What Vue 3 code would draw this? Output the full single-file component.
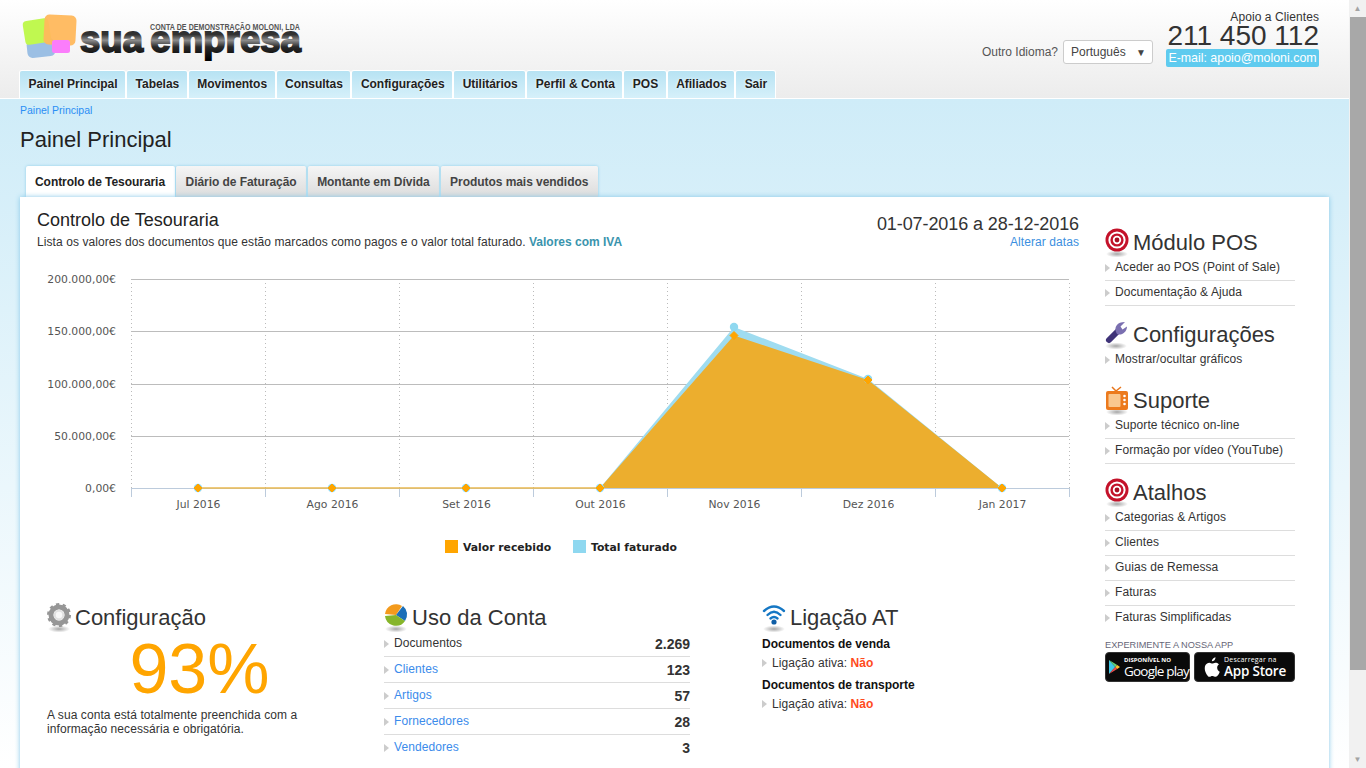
<script setup>
const navItems = ['Painel Principal', 'Tabelas', 'Movimentos', 'Consultas', 'Configurações', 'Utilitários', 'Perfil & Conta', 'POS', 'Afiliados', 'Sair']
const tabs = ['Controlo de Tesouraria', 'Diário de Faturação', 'Montante em Dívida', 'Produtos mais vendidos']

const BASE_Y = 223

const yLabels = [
  { label: '200.000,00€', y: 14 },
  { label: '150.000,00€', y: 66 },
  { label: '100.000,00€', y: 119 },
  { label: '50.000,00€', y: 171 },
]
const months = ['Jul 2016', 'Ago 2016', 'Set 2016', 'Out 2016', 'Nov 2016', 'Dez 2016', 'Jan 2017']
const ticks = [94, 228, 362, 496, 630, 764, 898, 1032]
const blueY = [BASE_Y, BASE_Y, BASE_Y, BASE_Y, 62, 114, BASE_Y]
const orangeY = [BASE_Y, BASE_Y, BASE_Y, BASE_Y, 70.5, 115, BASE_Y]

function pointX(i) {
  return 161 + i * 134
}
function areaPoints(values) {
  const line = values.map((y, i) => `${pointX(i)},${y}`).join(' ')
  return `${pointX(0)},${BASE_Y} ${line} ${pointX(6)},${BASE_Y}`
}
function diamond(i, y) {
  const x = pointX(i)
  return `${x},${y - 4} ${x + 4},${y} ${x},${y + 4} ${x - 4},${y}`
}

const sections = [
  { title: 'Módulo POS', icon: 'target', items: ['Aceder ao POS (Point of Sale)', 'Documentação & Ajuda'], lines: true },
  { title: 'Configurações', icon: 'wrench', items: ['Mostrar/ocultar gráficos'], lines: false },
  { title: 'Suporte', icon: 'tv', items: ['Suporte técnico on-line', 'Formação por vídeo (YouTube)'], lines: true },
  { title: 'Atalhos', icon: 'target', items: ['Categorias & Artigos', 'Clientes', 'Guias de Remessa', 'Faturas', 'Faturas Simplificadas'], lines: 'inner' },
]

const usage = [
  { label: 'Documentos', value: '2.269', link: false },
  { label: 'Clientes', value: '123', link: true },
  { label: 'Artigos', value: '57', link: true },
  { label: 'Fornecedores', value: '28', link: true },
  { label: 'Vendedores', value: '3', link: true },
]
</script>

<template>
  <div class="page">
    <div class="content">
      <header class="top">
        <div class="top-row">
          <svg class="logo" width="340" height="56" viewBox="0 0 340 56">
            <defs>
              <linearGradient id="logoText" x1="0" y1="0" x2="0" y2="1">
                <stop offset="0" stop-color="#1c1c1c" />
                <stop offset="0.38" stop-color="#333" />
                <stop offset="0.52" stop-color="#8c8c8c" />
                <stop offset="0.68" stop-color="#2a2a2a" />
                <stop offset="1" stop-color="#000" />
              </linearGradient>
              <radialGradient id="iconShade">
                <stop offset="0" stop-color="#000" stop-opacity="0.35" />
                <stop offset="1" stop-color="#000" stop-opacity="0" />
              </radialGradient>
            </defs>
            <rect x="7" y="29" width="28" height="18" rx="5" fill="#9bbfe4" transform="rotate(-6 21 38)" />
            <rect x="4" y="9.5" width="26" height="24" rx="4" fill="#c0f850" transform="rotate(-9 17 22)" />
            <rect x="24" y="5" width="32" height="30" rx="5" fill="#ffb85c" fill-opacity="0.95" transform="rotate(3 40 20)" />
            <rect x="32" y="30" width="18" height="13" rx="2.5" fill="#fb7dfb" />
            <text class="logo-sub" x="130" y="19.5" textLength="150" lengthAdjust="spacingAndGlyphs">CONTA DE DEMONSTRAÇÃO MOLONI, LDA</text>
            <text class="logo-name" x="60" y="42" textLength="221" lengthAdjust="spacingAndGlyphs" fill="url(#logoText)" stroke="url(#logoText)" stroke-width="1.8">sua empresa</text>
          </svg>
          <div class="lang">
            <span>Outro Idioma?</span>
            <div class="lang-select">Português<i>▼</i></div>
          </div>
          <div class="support">
            <div>Apoio a Clientes</div>
            <div class="support-phone">211 450 112</div>
            <div class="support-mail">E-mail: apoio@moloni.com</div>
          </div>
        </div>
        <nav class="nav">
          <a v-for="item in navItems" :key="item" class="nav-item">{{ item }}</a>
        </nav>
      </header>

      <div class="crumb">Painel Principal</div>
      <h1 class="page-title">Painel Principal</h1>

      <div class="tabs">
        <a v-for="(tab, i) in tabs" :key="tab" class="tab" :class="{ 'tab--active': i === 0 }">{{ tab }}</a>
      </div>

      <section class="card">
        <div class="main">
          <div class="main-head">
            <div>
              <h2>Controlo de Tesouraria</h2>
              <p>Lista os valores dos documentos que estão marcados como pagos e o valor total faturado. <b>Valores com IVA</b></p>
            </div>
            <div class="dates">
              <div class="dates-range">01-07-2016 a 28-12-2016</div>
              <a>Alterar datas</a>
            </div>
          </div>

          <svg class="chart" width="1042" height="300" viewBox="0 0 1042 300">
            <line v-for="row in yLabels" :key="row.label" x1="94" x2="1032" :y1="row.y" :y2="row.y" class="grid" />
            <line v-for="x in ticks" :key="'v' + x" :x1="x" :x2="x" y1="18" :y2="BASE_Y" class="dots" />
            <line v-for="x in ticks" :key="'t' + x" :x1="x" :x2="x" :y1="BASE_Y" :y2="BASE_Y + 9" class="tick" />
            <line x1="94" x2="1032" :y1="BASE_Y" :y2="BASE_Y" class="tick" />
            <text v-for="row in yLabels" :key="'l' + row.label" x="79" :y="row.y + 4" text-anchor="end" class="axis">{{ row.label }}</text>
            <text x="79" :y="BASE_Y + 4" text-anchor="end" class="axis">0,00€</text>
            <text v-for="(m, i) in months" :key="m" :x="pointX(i) + 0.5" y="243" text-anchor="middle" class="axis">{{ m }}</text>

            <polygon :points="areaPoints(blueY)" fill="#9fdcf0" />
            <polygon :points="areaPoints(orangeY)" fill="#ecae2e" />
            <line x1="161" x2="563" :y1="BASE_Y" :y2="BASE_Y" stroke="#eab84f" stroke-width="1.5" />
            <circle v-for="(y, i) in blueY" :key="'b' + i" :cx="pointX(i)" :cy="y" r="4.2" fill="#8fd8f0" />
            <polygon v-for="(y, i) in orangeY" :key="'o' + i" :points="diamond(i, y)" fill="#ffa500" stroke="#ffa500" stroke-width="1" stroke-linejoin="round" />

            <rect x="408" y="275" width="13" height="13" fill="#ffa500" />
            <text x="426" y="286" class="legend">Valor recebido</text>
            <rect x="536" y="275" width="13" height="13" fill="#8fd8f0" />
            <text x="554" y="286" class="legend">Total faturado</text>
          </svg>

          <div class="bottom">
            <div class="config">
              <h3 class="heading">
                <svg class="icon" width="24" height="30" viewBox="0 0 24 30">
                  <ellipse cx="12" cy="26" rx="11" ry="3.5" fill="url(#iconShade)" />
                  <circle cx="12" cy="12" r="8" fill="none" stroke="#969696" stroke-width="5" />
                  <circle cx="12" cy="12" r="10.5" fill="none" stroke="#969696" stroke-width="3" stroke-dasharray="3.2 3.4" />
                  <circle cx="12" cy="12" r="5.4" fill="#e2e2e2" />
                  <circle cx="12" cy="12" r="3.2" fill="#f8f8f8" />
                </svg>
                Configuração
              </h3>
              <div class="percent">93%</div>
              <p>A sua conta está totalmente preenchida com a informação necessária e obrigatória.</p>
            </div>

            <div class="usage">
              <h3 class="heading">
                <svg class="icon" width="24" height="30" viewBox="0 0 24 30">
                  <ellipse cx="12" cy="26" rx="11" ry="3.5" fill="url(#iconShade)" />
                  <path d="M12 12 L1 11 A11 11 0 0 1 18 3 Z" fill="#f39a1c" />
                  <path d="M12 12 L19 3 A11 11 0 0 1 21 18 Z" fill="#1b6fb8" />
                  <path d="M12 12 L21 18 A11 11 0 0 1 1 13 Z" fill="#86b52a" />
                </svg>
                Uso da Conta
              </h3>
              <ul class="usage-list">
                <li v-for="row in usage" :key="row.label" class="bullet">
                  <span :class="{ link: row.link }">{{ row.label }}</span>
                  <b>{{ row.value }}</b>
                </li>
              </ul>
            </div>

            <div class="at">
              <h3 class="heading">
                <svg class="icon" width="24" height="30" viewBox="0 0 24 30">
                  <ellipse cx="12" cy="26" rx="11" ry="3.5" fill="url(#iconShade)" />
                  <g fill="none" stroke="#1577c4" stroke-width="2.4" stroke-linecap="round">
                    <path d="M2 8 Q12 -1 22 8" />
                    <path d="M5.5 12 Q12 5.5 18.5 12" />
                    <path d="M8.5 15.5 Q12 12.5 15.5 15.5" />
                  </g>
                  <circle cx="12" cy="19" r="2.6" fill="#0f5ea6" />
                </svg>
                Ligação AT
              </h3>
              <div class="at-title">Documentos de venda</div>
              <div class="bullet at-row">Ligação ativa:&nbsp;<b>Não</b></div>
              <div class="at-title">Documentos de transporte</div>
              <div class="bullet at-row">Ligação ativa:&nbsp;<b>Não</b></div>
            </div>
          </div>
        </div>

        <aside class="side">
          <div v-for="section in sections" :key="section.title" class="side-section">
            <h3 class="heading">
              <svg v-if="section.icon === 'target'" class="icon" width="24" height="30" viewBox="0 0 24 30">
                <ellipse cx="12" cy="26" rx="11" ry="3.5" fill="url(#iconShade)" />
                <circle cx="12" cy="12" r="11.5" fill="#c4122a" />
                <circle cx="12" cy="12" r="8.6" fill="#fff" />
                <circle cx="12" cy="12" r="6.6" fill="#c4122a" />
                <circle cx="12" cy="12" r="4.2" fill="#fff" />
                <circle cx="12" cy="12" r="2.4" fill="#a80f24" />
              </svg>
              <svg v-else-if="section.icon === 'wrench'" class="icon" width="24" height="30" viewBox="0 0 24 30">
                <ellipse cx="11" cy="26" rx="11" ry="3.5" fill="url(#iconShade)" />
                <path d="M4 20 L12 12" stroke="#3f3378" stroke-width="6" stroke-linecap="round" />
                <path d="M11 12 C9 7 12 2 20 2 L15.5 6.5 L17.5 9.5 L22 6.5 C22 12.5 16 16 12 14 Z" fill="#7a6fb0" />
              </svg>
              <svg v-else class="icon" width="24" height="30" viewBox="0 0 24 30">
                <ellipse cx="12" cy="26" rx="11" ry="3.5" fill="url(#iconShade)" />
                <path d="M7 1 L11 5 L16 1" fill="none" stroke="#e8761c" stroke-width="1.5" />
                <rect x="1" y="5" width="22" height="19" rx="2" fill="#ec7a1d" />
                <rect x="3.5" y="8" width="12" height="13" rx="1" fill="#f9c78f" />
                <circle cx="19.5" cy="10" r="1.3" fill="#fff" />
                <circle cx="19.5" cy="14" r="1.3" fill="#fff" />
                <circle cx="19.5" cy="18" r="1.3" fill="#fff" />
              </svg>
              {{ section.title }}
            </h3>
            <ul class="side-list" :class="{ 'side-list--lined': section.lines === true, 'side-list--inner': section.lines === 'inner' }">
              <li v-for="item in section.items" :key="item" class="bullet">{{ item }}</li>
            </ul>
          </div>

          <div class="app-label">EXPERIMENTE A NOSSA APP</div>
          <div class="badges">
            <div class="badge badge--play">
              <svg width="14" height="18" viewBox="0 0 14 18">
                <path d="M0 0 L8 9 L0 18 Z" fill="#3fc8e8" />
                <path d="M0 0 L10.5 6.5 L8 9 Z" fill="#5fd07a" />
                <path d="M0 18 L10.5 11.5 L8 9 Z" fill="#ef4b4b" />
                <path d="M10.5 6.5 L14 9 L10.5 11.5 L8 9 Z" fill="#fbc02d" />
              </svg>
              <div>
                <small>DISPONÍVEL NO</small>
                <strong>Google play</strong>
              </div>
            </div>
            <div class="badge badge--store">
              <svg width="16" height="20" viewBox="0 0 18 22">
                <path d="M13 0 C13 2.5 11 4.6 8.8 4.6 C8.7 2.4 10.8 0.2 13 0 Z" fill="#fff" />
                <path d="M14.8 11.6 C14.8 9.3 16.6 8.3 16.8 8.1 C15.6 6.4 13.8 6.1 13.1 6.1 C11.5 6 10.1 7 9.3 7 C8.5 7 7.3 6.1 6 6.1 C4.2 6.2 2.6 7.2 1.7 8.8 C-0.1 12 1.2 16.7 3 19.3 C3.9 20.6 4.9 22 6.3 22 C7.6 21.9 8.1 21.1 9.7 21.1 C11.2 21.1 11.7 22 13.1 22 C14.5 21.9 15.4 20.7 16.3 19.4 C17.3 17.9 17.7 16.5 17.8 16.4 C17.7 16.4 14.8 15.2 14.8 11.6 Z" fill="#fff" />
              </svg>
              <div>
                <small>Descarregar na</small>
                <strong>App Store</strong>
              </div>
            </div>
          </div>
        </aside>
      </section>
    </div>

    <div class="scrollbar">
      <span class="scroll-arrow">▲</span>
      <div class="scroll-thumb"></div>
      <span class="scroll-arrow">▼</span>
    </div>
  </div>
</template>

<style>
html,
body {
  margin: 0;
  overflow: hidden;
}
</style>

<style scoped>
.page {
  display: flex;
  width: 1366px;
  height: 768px;
  overflow: hidden;
  color: #333;
  font-family: "Liberation Sans", Arial, sans-serif;
  font-size: 12px;
  letter-spacing: 0.08px;
}

.content {
  width: 1349px;
  height: 768px;
  overflow: hidden;
  background: linear-gradient(#cfecf8 99px, #fff 768px);
}

.top {
  height: 98px;
  padding-left: 20px;
  background: linear-gradient(#fff, #ececec);
  border-bottom: 1px solid #fff;
}

.top-row {
  display: flex;
  height: 71px;
  padding-right: 30px;
}

.logo {
  margin-top: 10px;
}

.logo-sub {
  font-size: 8.5px;
  font-weight: 700;
  fill: #555;
}

.logo-name {
  font-size: 37px;
  font-weight: 700;
  word-spacing: -3px;
}

.lang {
  display: flex;
  align-items: center;
  gap: 5px;
  height: 24px;
  margin: 40px 13px 0 auto;
  color: #555;
  letter-spacing: 0;
}

.lang-select {
  display: flex;
  align-items: center;
  justify-content: space-between;
  box-sizing: border-box;
  width: 90px;
  height: 24px;
  padding: 0 6px 0 7px;
  border: 1px solid #ccc;
  border-radius: 3px;
  background: #fff;
  color: #444;
}

.lang-select i {
  font-size: 10px;
  font-style: normal;
}

.support {
  width: 153px;
  padding-top: 10px;
  text-align: right;
}

.support-phone {
  margin-top: -1px;
  color: #333;
  font-size: 28px;
  letter-spacing: 0;
  line-height: 26px;
}

.support-mail {
  height: 18px;
  border-radius: 2px;
  background: #5fcbef;
  color: #fff;
  font-size: 12.4px;
  letter-spacing: 0;
  line-height: 18px;
  text-align: center;
  white-space: nowrap;
}

.nav {
  display: flex;
  gap: 2px;
}

.nav-item {
  height: 27px;
  padding: 0 7.5px 0 8.5px;
  border-radius: 2px 2px 0 0;
  background: linear-gradient(#b7e3f3, #d6f0fa);
  box-shadow: 0 0 0 1px #fff;
  color: #222;
  font-weight: 700;
  letter-spacing: -0.02px;
  line-height: 27px;
  text-shadow: 0 0 3px #fff;
}

.crumb {
  height: 22px;
  padding-left: 20px;
  color: #2b8ef5;
  font-size: 10.5px;
  letter-spacing: 0;
  line-height: 22px;
}

.page-title {
  margin: 0;
  padding-left: 20px;
  color: #222;
  font-size: 22px;
  font-weight: 400;
  letter-spacing: 0;
  line-height: 38px;
}

.tabs {
  display: flex;
  gap: 1.5px;
  height: 31px;
  margin-top: 7px;
  padding-left: 25.5px;
}

.tab {
  padding: 1px 9.5px 0;
  border-radius: 2px 2px 0 0;
  background: linear-gradient(#f5f5f5, #dcdcdc);
  box-shadow: 0 0 3px #8ccbe8;
  color: #444;
  font-weight: 700;
  letter-spacing: -0.05px;
  line-height: 31px;
}

.tab--active {
  background: #fff;
  color: #222;
}

.card {
  display: flex;
  position: relative;
  width: 1309px;
  height: 600px;
  margin-left: 20px;
  box-sizing: border-box;
  padding: 12px 0 0 17px;
  background: #fff;
  box-shadow: 0 0 5px #85c8e8;
}

.main {
  width: 1042px;
}

.main-head {
  display: flex;
  justify-content: space-between;
  height: 56px;
}

.main-head h2 {
  margin: 0;
  color: #222;
  font-size: 18px;
  font-weight: 400;
  letter-spacing: 0;
  line-height: 22px;
}

.main-head p {
  margin: 3px 0 0;
  line-height: 16px;
}

.main-head b {
  color: #3a94ad;
  letter-spacing: 0;
}

.dates {
  text-align: right;
}

.dates-range {
  margin-top: 4px;
  font-size: 18px;
  letter-spacing: -0.09px;
  line-height: 22px;
}

.dates a {
  display: block;
  margin-top: -1px;
  color: #3b8fe0;
  line-height: 16px;
}

.chart {
  display: block;
}

.grid {
  stroke: #bcbcbc;
  shape-rendering: crispEdges;
}

.dots {
  stroke: #bbb;
  stroke-dasharray: 1 3;
  shape-rendering: crispEdges;
}

.tick {
  stroke: #bccbdc;
  shape-rendering: crispEdges;
}

.axis {
  fill: #555;
  font-family: "DejaVu Sans", sans-serif;
  font-size: 10.8px;
  letter-spacing: 0;
}

.legend {
  fill: #222;
  font-family: "DejaVu Sans", sans-serif;
  font-size: 10.8px;
  font-weight: 700;
  letter-spacing: 0;
}

.bottom {
  display: grid;
  grid-template-columns: 337px 378px 1fr;
  margin-top: 38px;
  padding-left: 10px;
}

.heading {
  display: flex;
  align-items: flex-start;
  gap: 4px;
  height: 28px;
  margin: 0;
  color: #333;
  font-size: 22px;
  font-weight: 400;
  letter-spacing: 0;
  line-height: 30px;
}

.icon {
  flex: none;
  overflow: visible;
}

.percent {
  width: 305px;
  margin-top: 2px;
  color: #ffa500;
  font-size: 70px;
  letter-spacing: 0;
  line-height: 72px;
  text-align: center;
}

.config p {
  width: 270px;
  margin: 3px 0 0;
  line-height: 14px;
}

.bullet {
  position: relative;
  padding-left: 10px;
}

.bullet::before {
  position: absolute;
  top: 50%;
  left: 0;
  margin-top: -4px;
  border-top: 4px solid transparent;
  border-bottom: 4px solid transparent;
  border-left: 5px solid #ccc;
  content: "";
}

.usage-list,
.side-list {
  margin: 0;
  padding: 0;
  list-style: none;
}

.usage-list {
  width: 306px;
}

.usage-list li {
  display: flex;
  align-items: flex-start;
  justify-content: space-between;
  height: 25px;
  border-bottom: 1px solid #ddd;
  line-height: 25px;
}

.usage-list li:last-child {
  border-bottom-color: transparent;
}

.usage-list b {
  color: #333;
  font-size: 14px;
  letter-spacing: 0;
  line-height: 27px;
}

.link {
  color: #3b8beb;
}

.at-title {
  margin-top: 4px;
  color: #111;
  font-weight: 700;
  letter-spacing: 0;
  line-height: 19px;
}

.at-row {
  height: 18px;
  line-height: 18px;
}

.at-row b {
  color: #ff4a1c;
  letter-spacing: 0;
}

.side {
  width: 190px;
  margin-left: 26px;
  padding-top: 19px;
}

.side-section {
  margin-bottom: 14px;
}

.side-list li {
  height: 24px;
  line-height: 23px;
}

.side-list--lined li,
.side-list--inner li:not(:last-child) {
  border-bottom: 1px solid #ddd;
}

.app-label {
  margin-top: -5px;
  color: #667;
  font-size: 9.2px;
  letter-spacing: 0;
  line-height: 12px;
}

.badges {
  display: flex;
  justify-content: space-between;
  margin-top: 1px;
}

.badge {
  display: flex;
  align-items: center;
  gap: 4px;
  box-sizing: border-box;
  height: 30px;
  padding-left: 3px;
  border: 1px solid #333;
  border-radius: 4px;
  background: #0a0a0a;
  color: #fff;
  font-family: "Open Sans", sans-serif;
  letter-spacing: 0;
  white-space: nowrap;
}

.badge--play {
  width: 85px;
}

.badge--store {
  width: 101px;
  padding-left: 9px;
}

.badge small {
  display: block;
  font-size: 6px;
  font-weight: 700;
  line-height: 8px;
}

.badge strong {
  display: block;
  font-size: 13.5px;
  font-weight: 400;
  letter-spacing: -0.8px;
  line-height: 15px;
}

.badge--store small {
  font-size: 7px;
  font-weight: 400;
  letter-spacing: 0.2px;
}

.badge--store strong {
  font-size: 13.5px;
  font-weight: 600;
  letter-spacing: -0.2px;
}

.scrollbar {
  display: flex;
  flex-direction: column;
  width: 17px;
  height: 768px;
  background: #f1f1f1;
  color: #a3a3a3;
  font-size: 8px;
  text-align: center;
}

.scroll-arrow {
  height: 17px;
  line-height: 17px;
}

.scroll-thumb {
  width: 16px;
  height: 653px;
  margin-left: 1px;
  background: #a8a8a8;
}

.scroll-arrow:last-child {
  margin-top: auto;
}
</style>
